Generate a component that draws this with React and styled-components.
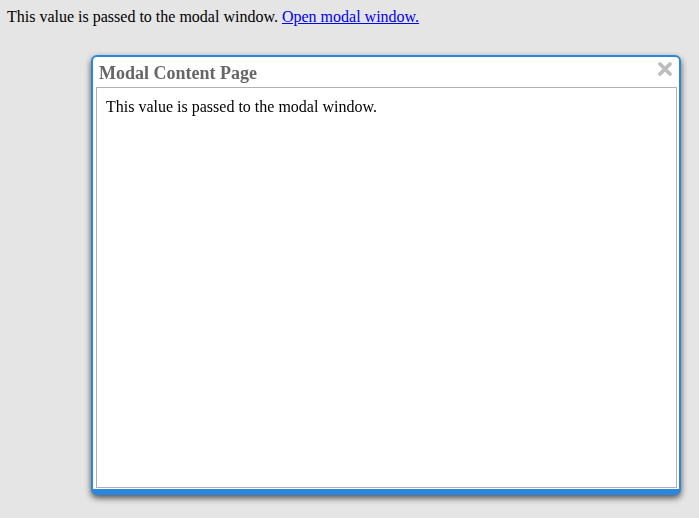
import React from 'react'
import styled, { createGlobalStyle } from 'styled-components'

const GlobalStyle = createGlobalStyle`
    html, body {
        margin: 0;
        background: #e5e5e5;
    }
    body {
        padding: 8px 8px 8px 7px;
        height: 518px;
        box-sizing: border-box;
        font-family: "Liberation Serif", "Times New Roman", serif;
        font-size: 16px;
        color: #000;
    }
`
const Intro = styled.p`
    margin: 0;
    line-height: 18px;
`
const Link = styled.a`
    color: #0000ee;
    text-decoration: underline;
    cursor: pointer;
`
const Modal = styled.div`
    position: fixed;
    left: 91px;
    top: 55px;
    width: 590px;
    height: 440px;
    box-sizing: border-box;
    display: flex;
    flex-direction: column;
    background: #fff;
    border: 2px solid #2b87de;
    border-bottom-width: 6px;
    border-radius: 6px;
    box-shadow: 0 3px 6px rgba(0, 0, 0, 0.65);
    padding: 0 2px 1px 3px;
`
const TitleBar = styled.div`
    height: 30px;
    display: flex;
    align-items: center;
    justify-content: space-between;
    padding: 0 4px 0 3px;
`
const Title = styled.h3`
    margin: 2px 0 0;
    font-size: 18px;
    font-weight: bold;
    color: #666;
`
const CloseButton = styled.button`
    background: none;
    border: none;
    padding: 0;
    margin-top: -6px;
    width: 16px;
    height: 16px;
    cursor: pointer;
`
const Frame = styled.div`
    flex: 1;
    border: 1px solid #b3b0b3;
    padding: 10px 9px;
`
const FrameText = styled.p`
    margin: 0;
    line-height: 18px;
`

const App = () => {
    return (
        <>
            <GlobalStyle />
            <Intro>
                This value is passed to the modal window. <Link>Open modal window.</Link>
            </Intro>
            <Modal>
                <TitleBar>
                    <Title>Modal Content Page</Title>
                    <CloseButton title='Close'>
                        <svg width='16' height='16' viewBox='0 0 16 16'>
                            <path d='M3 3 L13 13 M13 3 L3 13' stroke='#bdbdbd' strokeWidth='3.8' strokeLinecap='round' />
                        </svg>
                    </CloseButton>
                </TitleBar>
                <Frame>
                    <FrameText>This value is passed to the modal window.</FrameText>
                </Frame>
            </Modal>
        </>
    )
}

export default App
